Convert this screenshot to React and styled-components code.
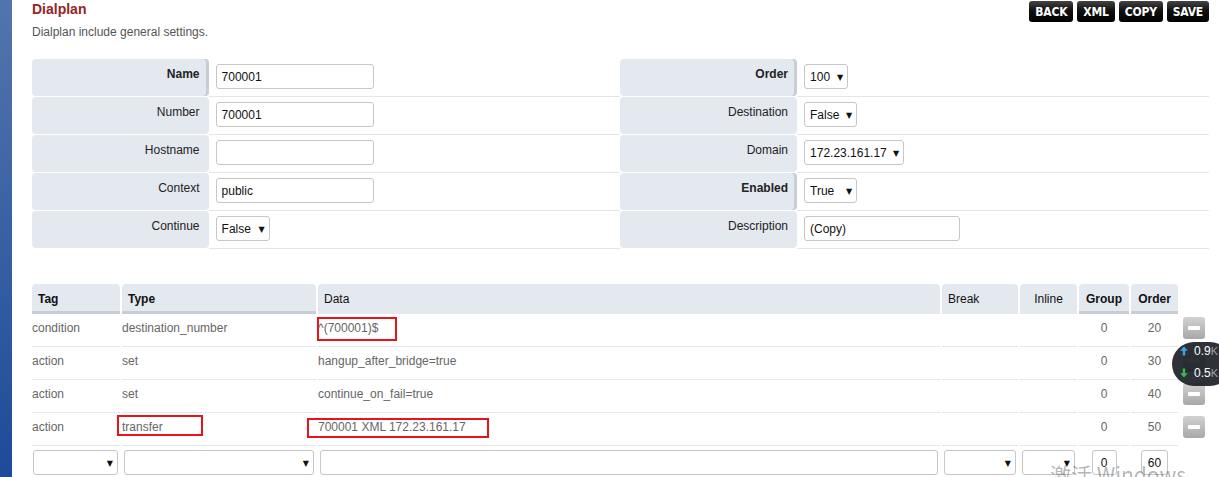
import React from "react";
import styled, { createGlobalStyle } from "styled-components";

const GlobalStyle = createGlobalStyle`
  *, *::before, *::after { box-sizing: border-box; }
  html, body { margin: 0; padding: 0; background: #fff; }
  body {
    font-family: "Liberation Sans", Arial, sans-serif;
    font-size: 12px;
    color: #333;
  }
`;

const Page = styled.div`
  position: relative;
  display: flex;
  height: 477px;
  overflow: hidden;
`;

const Sidebar = styled.div`
  flex: none;
  width: 12px;
  background: linear-gradient(#5375ad, #1d4b99);
`;

const Main = styled.main`
  flex: 1;
  min-width: 0;
  padding: 0 10px 0 20px;
`;

const Header = styled.header`
  display: flex;
  justify-content: space-between;
  align-items: flex-start;
  height: 40px;
`;

const Title = styled.h1`
  margin: 0;
  font-size: 14px;
  line-height: 18px;
  font-weight: bold;
  color: #952424;
`;

const Subtitle = styled.p`
  margin: 6px 0 0;
  line-height: 16px;
  color: #555;
`;

const ButtonGroup = styled.div`
  display: flex;
  gap: 4px;
  margin-top: 1px;
`;

const ActionButton = styled.button`
  height: 21px;
  padding: 0 6px;
  border: 0;
  border-radius: 3px;
  background: linear-gradient(#444 0%, #111 45%, #000 100%);
  color: #fff;
  font-family: "DejaVu Sans Condensed", "DejaVu Sans", sans-serif;
  font-weight: bold;
  font-size: 12px;
  letter-spacing: -0.2px;
  cursor: pointer;
`;

const FormGrid = styled.div`
  display: grid;
  grid-template-columns: 15% 35% 15% 35%;
  margin-top: 19px;
`;

const Label = styled.div`
  height: 37px;
  margin-bottom: 1px;
  padding: 8px 9px 0 0;
  line-height: 14px;
  text-align: right;
  background: #e4e8ef;
  border-radius: 4px;
  color: #222;
  font-weight: ${(p) => (p.$required ? "bold" : "normal")};
  box-shadow: ${(p) => (p.$required ? "inset -3px 0 0 #c9ced6" : "none")};
`;

const Field = styled.div`
  height: 38px;
  padding: 5px 8px 0 7px;
  border-bottom: 1px solid #e6e6e6;
`;

const TextInput = styled.input`
  width: ${(p) => p.$w || "158px"};
  height: 25px;
  padding: 0 5px;
  border: 1px solid #c6c6c6;
  border-radius: 3px;
  background: #fff;
  font: 12px "Liberation Sans", Arial, sans-serif;
  color: #111;
  text-align: ${(p) => (p.$center ? "center" : "left")};
  outline: none;
`;

const SelectBox = styled.span`
  position: relative;
  display: inline-block;
  width: ${(p) => p.$w || "auto"};

  &::after {
    content: "▼";
    position: absolute;
    right: 5px;
    top: 50%;
    transform: translateY(-50%);
    font-family: "DejaVu Sans", sans-serif;
    font-size: 8px;
    color: #111;
    pointer-events: none;
  }
`;

const Select = styled.select`
  appearance: none;
  width: 100%;
  height: 25px;
  padding: 0 14px 0 5px;
  border: 1px solid #c6c6c6;
  border-radius: 3px;
  background: #fff;
  font: 12px "Liberation Sans", Arial, sans-serif;
  color: #111;
  outline: none;
`;

const Dropdown = ({ w, value }) => (
  <SelectBox $w={w}>
    <Select defaultValue={value}>
      <option value={value}>{value}</option>
    </Select>
  </SelectBox>
);

const cols = "88px 194px 622px 76px 57px 50px 47px 29px";

const Table = styled.section`
  margin-top: 35px;
`;

const TableRow = styled.div`
  display: grid;
  grid-template-columns: ${cols};
  column-gap: 2px;
`;

const HeadCell = styled.div`
  height: 30px;
  line-height: 30px;
  padding: 0 6px;
  text-align: ${(p) => (p.$center ? "center" : "left")};
  background: ${(p) => (p.$blank ? "transparent" : "#e4e8ef")};
  border-radius: 4px 4px 0 0;
  color: #111;
  font-weight: ${(p) => (p.$sorted ? "bold" : "normal")};
  box-shadow: ${(p) => (p.$sorted ? "inset 0 -3px 0 #c8cdd5" : "none")};
`;

const Cell = styled.div`
  height: 33px;
  padding-top: 5px;
  line-height: 18px;
  color: #666;
  text-align: ${(p) => (p.$center ? "center" : "left")};
  border-bottom: 1px solid #e3e7ee;
  white-space: nowrap;
`;

const ActionCell = styled.div`
  height: 33px;
  padding: 3px 0 0 3px;
`;

const MinusButton = styled.button`
  display: flex;
  align-items: center;
  justify-content: center;
  width: 22px;
  height: 22px;
  padding: 0;
  border: 0;
  border-radius: 3px;
  background: linear-gradient(#d2d2d2, #a8a8a8);
  cursor: pointer;

  &::before {
    content: "";
    width: 12px;
    height: 4px;
    border-radius: 1px;
    background: #fff;
  }
`;

const AddCell = styled.div`
  padding: 4px 2px 0;
  text-align: ${(p) => (p.$center ? "center" : "left")};

  &:first-child {
    padding-left: 1px;
  }
`;

const Mark = styled.span`
  position: relative;
  display: inline-block;

  &::after {
    content: "";
    position: absolute;
    left: ${(p) => p.$l}px;
    top: ${(p) => p.$t}px;
    width: ${(p) => p.$w}px;
    height: ${(p) => p.$h}px;
    border: 2px solid #e8141a;
  }
`;

const SpeedBadge = styled.div`
  position: absolute;
  top: 342px;
  left: 1172px;
  width: 60px;
  height: 44px;
  padding: 1px 0 0 8px;
  border-radius: 22px;
  background: rgba(30, 33, 40, 0.93);
  display: flex;
  flex-direction: column;
  gap: 6px;
  overflow: hidden;
`;

const SpeedRow = styled.div`
  display: flex;
  align-items: center;
  gap: 6px;
  height: 16px;
  color: #fff;
  font-size: 12px;
  white-space: nowrap;

  small {
    font-size: 11px;
    color: #9aa0a8;
  }
`;

const Watermark = styled.div`
  position: absolute;
  left: 1050px;
  top: 464px;
  font-family: "Noto Sans CJK SC", "DejaVu Sans", sans-serif;
  font-size: 21px;
  line-height: 1;
  color: rgba(90, 90, 90, 0.45);
  pointer-events: none;
  white-space: nowrap;
`;

const Arrow = ({ down, color }) => (
  <svg width="8" height="10" viewBox="0 0 8 10">
    <g transform={down ? "rotate(180 4 5)" : undefined}>
      <path d="M4 0.5 L7.8 4.8 H5.2 V9.5 H2.8 V4.8 H0.2 Z" fill={color} />
    </g>
  </svg>
);

const formRows = [
  [
    { label: "Name", required: true, input: "700001" },
    { label: "Order", required: true, select: "100", w: "44px" },
  ],
  [
    { label: "Number", input: "700001" },
    { label: "Destination", select: "False", w: "53px" },
  ],
  [
    { label: "Hostname", input: "" },
    { label: "Domain", select: "172.23.161.17", w: "100px" },
  ],
  [
    { label: "Context", input: "public" },
    { label: "Enabled", required: true, select: "True", w: "53px" },
  ],
  [
    { label: "Continue", select: "False", w: "54px" },
    { label: "Description", input: "(Copy)", w: "156px" },
  ],
];

const headers = [
  { name: "Tag", sorted: true },
  { name: "Type", sorted: true },
  { name: "Data" },
  { name: "Break" },
  { name: "Inline", center: true },
  { name: "Group", sorted: true, center: true },
  { name: "Order", sorted: true, center: true },
];

const details = [
  { tag: "condition", type: "destination_number", data: "^(700001)$", order: 20, dataMark: { l: -1, t: -2, w: 80, h: 24 } },
  { tag: "action", type: "set", data: "hangup_after_bridge=true", order: 30 },
  { tag: "action", type: "set", data: "continue_on_fail=true", order: 40 },
  { tag: "action", type: "transfer", data: "700001 XML 172.23.161.17", order: 50, typeMark: { l: -5, t: -3, w: 86, h: 21 }, dataMark: { l: -11, t: 0, w: 182, h: 20 } },
];

const withMark = (text, m) =>
  m ? (
    <Mark $l={m.l} $t={m.t} $w={m.w} $h={m.h}>
      {text}
    </Mark>
  ) : (
    text
  );

export default function App() {
  return (
    <>
      <GlobalStyle />
      <Page>
        <Sidebar />
        <Main>
          <Header>
            <div>
              <Title>Dialplan</Title>
              <Subtitle>Dialplan include general settings.</Subtitle>
            </div>
            <ButtonGroup>
              <ActionButton>BACK</ActionButton>
              <ActionButton>XML</ActionButton>
              <ActionButton>COPY</ActionButton>
              <ActionButton>SAVE</ActionButton>
            </ButtonGroup>
          </Header>

          <FormGrid>
            {formRows.flat().map((f) => (
              <React.Fragment key={f.label}>
                <Label $required={f.required}>{f.label}</Label>
                <Field>
                  {f.select !== undefined ? (
                    <Dropdown w={f.w} value={f.select} />
                  ) : (
                    <TextInput $w={f.w} defaultValue={f.input} />
                  )}
                </Field>
              </React.Fragment>
            ))}
          </FormGrid>

          <Table>
            <TableRow>
              {headers.map((h) => (
                <HeadCell key={h.name} $sorted={h.sorted} $center={h.center}>
                  {h.name}
                </HeadCell>
              ))}
              <HeadCell $blank />
            </TableRow>

            {details.map((d) => (
              <TableRow key={d.order}>
                <Cell>{d.tag}</Cell>
                <Cell>{withMark(d.type, d.typeMark)}</Cell>
                <Cell>{withMark(d.data, d.dataMark)}</Cell>
                <Cell />
                <Cell />
                <Cell $center>0</Cell>
                <Cell $center>{d.order}</Cell>
                <ActionCell>
                  <MinusButton aria-label="delete" />
                </ActionCell>
              </TableRow>
            ))}

            <TableRow>
              <AddCell>
                <Dropdown w="100%" value="" />
              </AddCell>
              <AddCell>
                <Dropdown w="100%" value="" />
              </AddCell>
              <AddCell>
                <TextInput $w="100%" defaultValue="" />
              </AddCell>
              <AddCell>
                <Dropdown w="100%" value="" />
              </AddCell>
              <AddCell>
                <Dropdown w="100%" value="" />
              </AddCell>
              <AddCell $center>
                <TextInput $w="25px" $center defaultValue="0" />
              </AddCell>
              <AddCell $center>
                <TextInput $w="27px" $center defaultValue="60" />
              </AddCell>
              <AddCell />
            </TableRow>
          </Table>
        </Main>

        <SpeedBadge>
          <SpeedRow>
            <Arrow color="#3aa6f0" />
            <span>
              0.9<small>K</small>
            </span>
          </SpeedRow>
          <SpeedRow>
            <Arrow down color="#2fbd4c" />
            <span>
              0.5<small>K</small>
            </span>
          </SpeedRow>
        </SpeedBadge>
        <Watermark>激活 Windows</Watermark>
      </Page>
    </>
  );
}
